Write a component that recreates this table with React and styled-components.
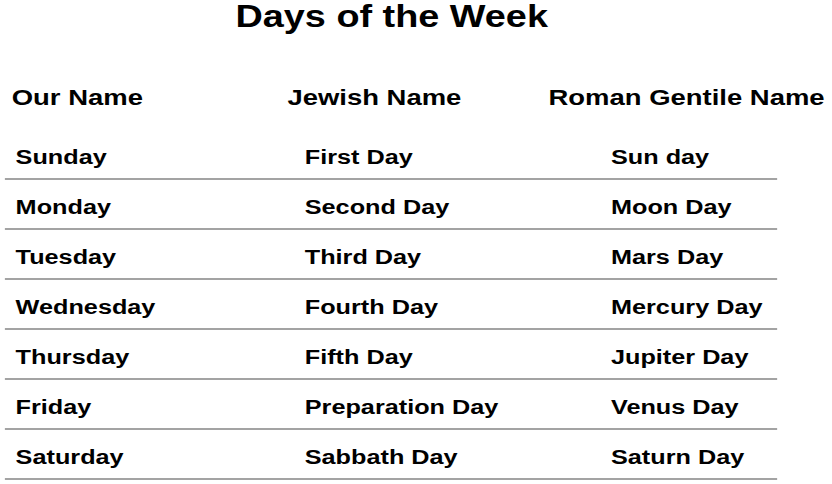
import styled, { createGlobalStyle } from 'styled-components';

const GlobalStyle = createGlobalStyle`
  html, body {
    margin: 0;
    padding: 0;
    background: #ffffff;
    overflow: hidden;
  }
  body {
    font-family: "Liberation Sans", Arial, sans-serif;
    color: #000000;
  }
`;

// the source picture is stretched horizontally, so the whole sheet is widened
export const Page = styled.div`
  width: 682px;
  height: 484px;
  padding-top: 3.4px;
  box-sizing: border-box;
  transform: scaleX(1.22);
  transform-origin: 0 0;
  font-weight: 700;
`;

export const Title = styled.h1`
  margin: 0;
  padding-left: 193px;
  font-size: 31px;
  line-height: 28px;
  font-weight: 700;
  white-space: nowrap;
`;

export const HeaderRow = styled.div`
  display: grid;
  grid-template-columns: 226px 214px auto;
  padding-left: 9.6px;
  margin-top: 52.6px;
  font-size: 22.5px;
  line-height: 28px;
  white-space: nowrap;
`;

export const Table = styled.div`
  display: flex;
  flex-direction: column;
  margin-top: 18px;
  margin-left: 4px;
  width: 633px;
`;

export const Row = styled.div`
  display: grid;
  grid-template-columns: 237px 251px 1fr;
  align-items: end;
  height: 48px;
  box-sizing: content-box;
  padding-left: 8.8px;
  border-bottom: 2px solid #a3a3a3;
`;

export const Cell = styled.span`
  font-size: 20.7px;
  line-height: 24px;
  padding-bottom: 9px;
  white-space: nowrap;
`;

const days = [
  ['Sunday', 'First Day', 'Sun day'],
  ['Monday', 'Second Day', 'Moon Day'],
  ['Tuesday', 'Third Day', 'Mars Day'],
  ['Wednesday', 'Fourth Day', 'Mercury Day'],
  ['Thursday', 'Fifth Day', 'Jupiter Day'],
  ['Friday', 'Preparation Day', 'Venus Day'],
  ['Saturday', 'Sabbath Day', 'Saturn Day'],
];

export default function App() {
  return (
    <>
      <GlobalStyle />
      <Page>
        <Title>Days of the Week</Title>
        <HeaderRow>
          <span>Our Name</span>
          <span>Jewish Name</span>
          <span>Roman Gentile Name</span>
        </HeaderRow>
        <Table>
          {days.map((d) => (
            <Row key={d[0]}>
              <Cell>{d[0]}</Cell>
              <Cell>{d[1]}</Cell>
              <Cell>{d[2]}</Cell>
            </Row>
          ))}
        </Table>
      </Page>
    </>
  );
}
